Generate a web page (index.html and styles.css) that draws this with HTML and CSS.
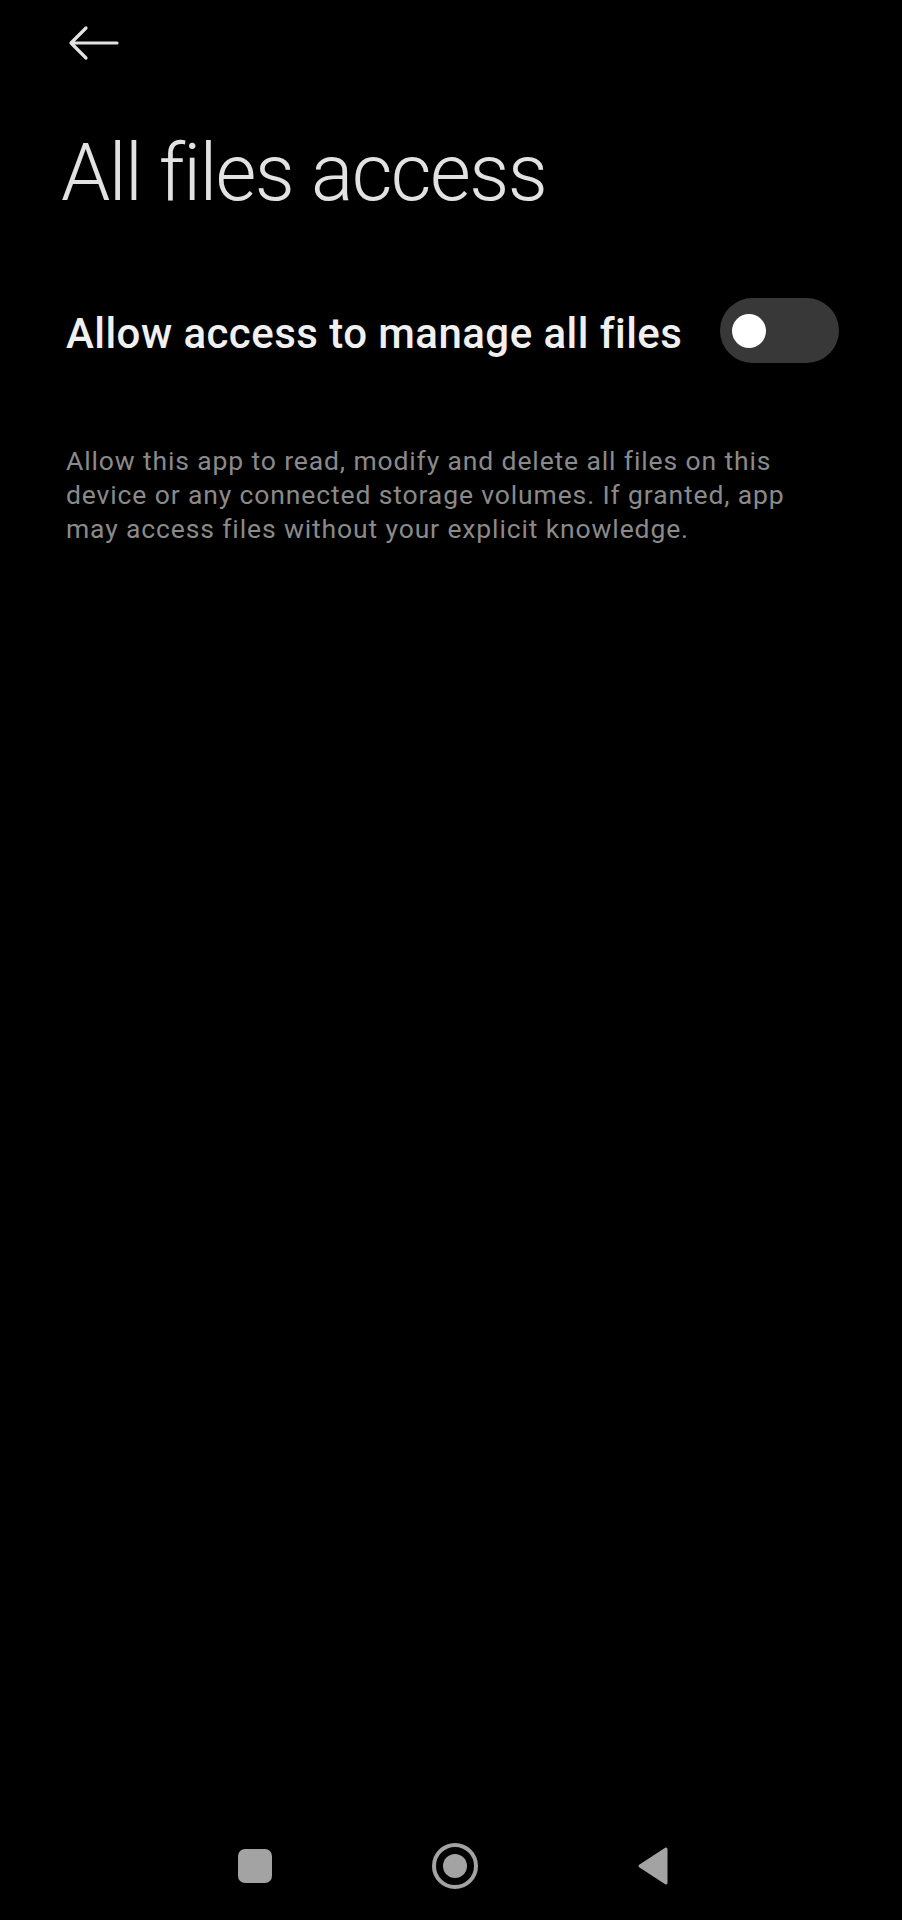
FILE: index.html
```html
<!DOCTYPE html>
<html lang="en">
<head>
<meta charset="utf-8">
<title>All files access</title>
<link rel="stylesheet" href="styles.css">
</head>
<body>
<div class="screen">
  <header class="topbar">
    <button class="back" aria-label="Back">
      <svg width="56" height="40" viewBox="0 0 56 40" fill="none" stroke="#e2e2e2" stroke-width="3.2" stroke-linecap="round" stroke-linejoin="round">
        <path d="M5 20 H51 M20 5 L5 20 L20 35"/>
      </svg>
    </button>
  </header>
  <h1 class="title">All files access</h1>
  <div class="row">
    <span class="row-label">Allow access to manage all files</span>
    <span class="switch"><span class="knob"></span></span>
  </div>
  <p class="desc">Allow this app to read, modify and delete all files on this device or any connected storage volumes. If granted, app may access files without your explicit knowledge.</p>
  <nav class="navbar">
    <span class="nav-recent"></span>
    <span class="nav-home"><span class="nav-home-dot"></span></span>
    <svg class="nav-back" width="32" height="40" viewBox="0 0 32 40">
      <path d="M29 3 L3 20 L29 37 Z" fill="#a3a3a3" stroke="#a3a3a3" stroke-width="3" stroke-linejoin="round"/>
    </svg>
  </nav>
</div>
</body>
</html>
```

FILE: styles.css
```css
html, body {
  margin: 0;
  padding: 0;
  background: #000;
}

.screen {
  width: 902px;
  min-height: 1920px;
  display: flex;
  flex-direction: column;
  background: #000;
  font-family: Roboto, "Noto Sans", sans-serif;
}

.topbar {
  padding: 23px 0 0 66px;
  height: 40px;
}

.back {
  display: block;
  padding: 0;
  margin: 0;
  border: 0;
  background: none;
  width: 56px;
  height: 40px;
}

.back svg {
  display: block;
}

.title {
  margin: 71px 0 0 0;
  padding-left: 61px;
  font-size: 79px;
  line-height: 79px;
  font-weight: 300;
  color: #e2e2e2;
  letter-spacing: -1.6px;
}

.row {
  margin-top: 85px;
  height: 65px;
  display: flex;
  align-items: center;
  padding: 0 63px 0 66px;
}

.row-label {
  font-size: 42px;
  line-height: 42px;
  font-weight: 500;
  color: #f0f0f0;
  letter-spacing: 0.45px;
  padding-top: 6px;
}

.switch {
  margin-left: auto;
  position: relative;
  flex: none;
  width: 119px;
  height: 65px;
  border-radius: 33px;
  background: #383838;
}

.knob {
  position: absolute;
  left: 12px;
  top: 16px;
  width: 34px;
  height: 34px;
  border-radius: 50%;
  background: #fff;
}

.desc {
  margin: 81px 0 0 0;
  padding: 0 92px 0 66px;
  font-size: 26.5px;
  line-height: 34px;
  font-weight: 400;
  letter-spacing: 0.87px;
  color: #8a8a8a;
}

.navbar {
  margin-top: auto;
  margin-bottom: 8px;
  height: 92px;
  display: flex;
  align-items: center;
  padding-left: 238px;
  gap: 160px;
}

.nav-recent {
  width: 34px;
  height: 34px;
  border-radius: 7px;
  background: #a3a3a3;
}

.nav-home {
  width: 38px;
  height: 38px;
  border: 4px solid #a3a3a3;
  border-radius: 50%;
  display: flex;
  align-items: center;
  justify-content: center;
}

.nav-home-dot {
  width: 24px;
  height: 24px;
  border-radius: 50%;
  background: #a3a3a3;
}

.nav-back {
  display: block;
  margin-left: -1px;
}
```
